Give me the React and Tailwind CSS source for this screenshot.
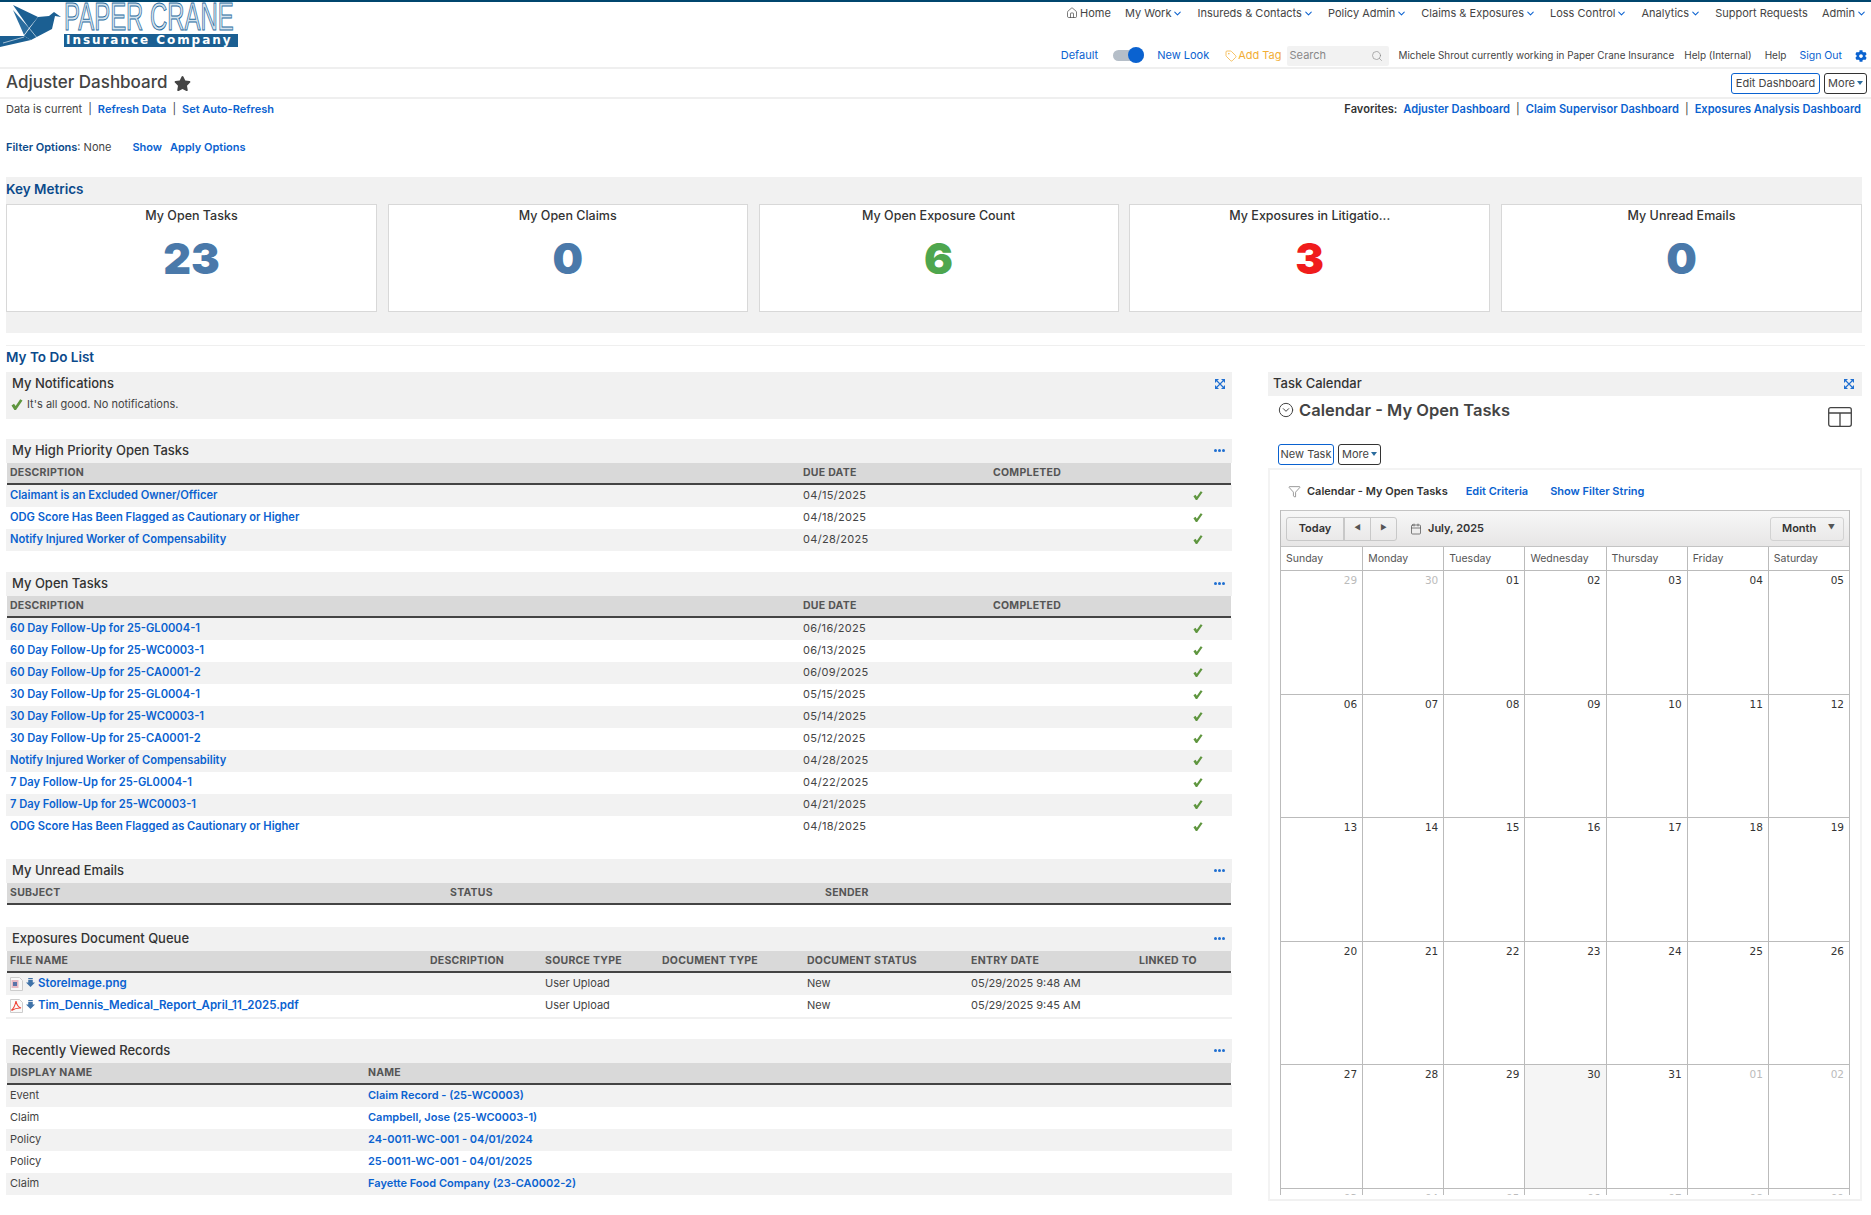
import { Calendar, ChevronDown, CircleChevronDown, Funnel, House, Search, Tag } from "lucide-react";
import { FaCog, FaStar } from "react-icons/fa";

const NAV = [
  { label: "My Work", menu: true },
  { label: "Insureds & Contacts", menu: true },
  { label: "Policy Admin", menu: true },
  { label: "Claims & Exposures", menu: true },
  { label: "Loss Control", menu: true },
  { label: "Analytics", menu: true },
  { label: "Support Requests", menu: false },
  { label: "Admin", menu: true },
];

const METRICS = [
  { title: "My Open Tasks", value: "23", color: "text-[#4a79aa]", width: "w-[371px]" },
  { title: "My Open Claims", value: "0", color: "text-[#4a79aa]", width: "w-[360px]" },
  { title: "My Open Exposure Count", value: "6", color: "text-[#4ea64e]", width: "w-[360px]" },
  { title: "My Exposures in Litigatio...", value: "3", color: "text-[#f01c1c]", width: "w-[361px]" },
  { title: "My Unread Emails", value: "0", color: "text-[#4a79aa]", width: "w-[361px]" },
];

const HIGH_PRIORITY = [
  ["Claimant is an Excluded Owner/Officer", "04/15/2025"],
  ["ODG Score Has Been Flagged as Cautionary or Higher", "04/18/2025"],
  ["Notify Injured Worker of Compensability", "04/28/2025"],
];

const OPEN_TASKS = [
  ["60 Day Follow-Up for 25-GL0004-1", "06/16/2025"],
  ["60 Day Follow-Up for 25-WC0003-1", "06/13/2025"],
  ["60 Day Follow-Up for 25-CA0001-2", "06/09/2025"],
  ["30 Day Follow-Up for 25-GL0004-1", "05/15/2025"],
  ["30 Day Follow-Up for 25-WC0003-1", "05/14/2025"],
  ["30 Day Follow-Up for 25-CA0001-2", "05/12/2025"],
  ["Notify Injured Worker of Compensability", "04/28/2025"],
  ["7 Day Follow-Up for 25-GL0004-1", "04/22/2025"],
  ["7 Day Follow-Up for 25-WC0003-1", "04/21/2025"],
  ["ODG Score Has Been Flagged as Cautionary or Higher", "04/18/2025"],
];

const RECENT = [
  ["Event", "Claim Record - (25-WC0003)"],
  ["Claim", "Campbell, Jose (25-WC0003-1)"],
  ["Policy", "24-0011-WC-001 - 04/01/2024"],
  ["Policy", "25-0011-WC-001 - 04/01/2025"],
  ["Claim", "Fayette Food Company (23-CA0002-2)"],
];

const WEEKDAYS = ["Sunday", "Monday", "Tuesday", "Wednesday", "Thursday", "Friday", "Saturday"];

const WEEKS = [
  ["29", "30", "01", "02", "03", "04", "05"],
  ["06", "07", "08", "09", "10", "11", "12"],
  ["13", "14", "15", "16", "17", "18", "19"],
  ["20", "21", "22", "23", "24", "25", "26"],
  ["27", "28", "29", "30", "31", "01", "02"],
  ["03", "04", "05", "06", "07", "08", "09"],
];

function isMuted(weekIndex, dayIndex) {
  if (weekIndex === 0) return dayIndex < 2;
  if (weekIndex === 4) return dayIndex > 4;
  return weekIndex === 5;
}

function Crane() {
  return (
    <svg viewBox="0 0 62 46" className="h-[46px] w-[62px] shrink-0">
      <polygon points="13,3 38,15 29,26" fill="#1b5f92" />
      <polygon points="13,8 29,26 24,33" fill="#2a6d9f" />
      <polygon points="38,15 49,14 54,10 61,15 55,14 52,27 31,38 24,34" fill="#1b5f92" />
      <polygon points="0,34 24,34 31,38 0,45" fill="#1b5f92" />
      <path d="M3 41 24 35M29 26 38 37" stroke="#fff" strokeWidth="0.6" />
    </svg>
  );
}

function Logo() {
  return (
    <div className="flex h-[46px] items-start">
      <Crane />
      <div className="ml-[2px] w-[174px]">
        <div className="h-[31px] origin-top-left scale-x-[0.63] whitespace-nowrap font-['Liberation_Sans',sans-serif] text-[38px] leading-[31px] text-[#d5e4ef] [-webkit-text-stroke:1px_#2b6c9e]">PAPER CRANE</div>
        <div className="mt-[1px] h-[13px] whitespace-nowrap bg-[#1b5f92] pl-[2px] font-['DejaVu_Sans',sans-serif] text-[12px] leading-[13px] font-bold tracking-[1.95px] text-white">Insurance Company</div>
      </div>
    </div>
  );
}

function MoreButton() {
  return (
    <button type="button" className="flex h-[21px] items-center rounded-[3px] border border-[#333] px-[3px] text-[11px] text-[#444]">
      More
      <span className="ml-[2px] h-0 w-0 border-x-[3.5px] border-t-[4px] border-x-transparent border-t-[#2b6c9e]" />
    </button>
  );
}

function ExpandIcon() {
  return (
    <svg viewBox="0 0 10 10" className="h-[10px] w-[10px] text-[#1f6fd1]" fill="currentColor">
      <path d="M0 0h4L0 4zM10 0v4L6 0zM0 10V6l4 4zM10 10H6l4-4z" />
      <path d="M2 2l6 6M8 2 2 8" stroke="currentColor" strokeWidth="1.1" />
    </svg>
  );
}

function Dots() {
  return (
    <span className="mb-[2px] flex gap-px">
      <span className="h-[3px] w-[3px] rounded-full bg-[#1f6fd1]" />
      <span className="h-[3px] w-[3px] rounded-full bg-[#1f6fd1]" />
      <span className="h-[3px] w-[3px] rounded-full bg-[#1f6fd1]" />
    </span>
  );
}

function Check({ className = "mb-[1px] h-[11px] w-[10px]" }) {
  return (
    <svg viewBox="0 0 12 12" className={`text-[#5f963f] ${className}`} fill="currentColor">
      <path d="M0.5 7 3 5.2 4.6 7.4 9.2 0.8 11.5 2 5 11.5H3.4z" />
    </svg>
  );
}

function PanelHeader({ title, action = <Dots /> }) {
  return (
    <div className="flex h-[24px] items-center justify-between bg-[#f1f1f1] pr-[7px] pl-[6px] text-[13px] font-medium text-[#333]">
      <span>{title}</span>
      {action}
    </div>
  );
}

function HeadRow({ columns, children }) {
  return (
    <div className={`mx-px grid h-[22px] items-center border-b-2 border-[#444] bg-[#d9d9d9] pl-[3px] text-[10.5px] font-bold tracking-[0.25px] text-[#555] ${columns}`}>
      {children}
    </div>
  );
}

function StripeRow({ index, columns, children }) {
  return (
    <div className={`grid h-[22px] items-center pb-[1px] pl-[4px] text-[11px] text-[#444] ${columns} ${index % 2 === 0 ? "bg-[#f2f2f2]" : "bg-white"}`}>
      {children}
    </div>
  );
}

function TaskTable({ title, rows }) {
  const columns = "grid-cols-[793px_190px_200px_1fr]";
  return (
    <section>
      <PanelHeader title={title} />
      <HeadRow columns={columns}>
        <span>DESCRIPTION</span>
        <span>DUE DATE</span>
        <span>COMPLETED</span>
      </HeadRow>
      {rows.map(([name, due], index) => (
        <StripeRow key={name + due} index={index} columns={columns}>
          <a className="text-[11.15px] font-semibold text-[#0a62d0]">{name}</a>
          <span className="tracking-[0.3px]">{due}</span>
          <span />
          <Check />
        </StripeRow>
      ))}
    </section>
  );
}

function DownArrow() {
  return (
    <svg viewBox="0 0 10 10" className="mb-[3px] h-[9px] w-[9px] text-[#3f72a8]" fill="currentColor">
      <path d="M2.5 0h5v1.2h-5zM2.5 2h5v3H10L5 10 0 5h2.5z" />
    </svg>
  );
}

function ImageFile() {
  return (
    <svg viewBox="0 0 13 14" className="h-[14px] w-[13px]">
      <path d="M.5.5h9l3 3v10H.5z" fill="#f7f7f7" stroke="#ccc" />
      <rect x="1.5" y="3" width="7" height="8" fill="#e7b9c4" />
      <rect x="3" y="5" width="4" height="4" fill="#5a73a8" />
    </svg>
  );
}

function PdfFile() {
  return (
    <svg viewBox="0 0 13 14" className="h-[14px] w-[13px]">
      <path d="M.5.5h9l3 3v10H.5z" fill="#fafafa" stroke="#ccc" />
      <path d="M6 2c-.6 3-2 7-4.500 9.500C4 10 8 8.700 11 9c-3-1-4.500-4-5-7z" fill="none" stroke="#ee4438" strokeWidth="1.100" />
    </svg>
  );
}

function DocumentQueue() {
  const columns = "grid-cols-[420px_115px_117px_145px_164px_168px_1fr]";
  const docs = [
    { icon: <ImageFile />, name: "StoreImage.png", date: "05/29/2025 9:48 AM" },
    { icon: <PdfFile />, name: "Tim_Dennis_Medical_Report_April_11_2025.pdf", date: "05/29/2025 9:45 AM" },
  ];
  return (
    <section className="mt-[1px] mb-[-1px] border-b-2 border-[#f1f1f1]">
      <PanelHeader title="Exposures Document Queue" />
      <HeadRow columns={columns}>
        <span>FILE NAME</span>
        <span>DESCRIPTION</span>
        <span>SOURCE TYPE</span>
        <span>DOCUMENT TYPE</span>
        <span>DOCUMENT STATUS</span>
        <span>ENTRY DATE</span>
        <span>LINKED TO</span>
      </HeadRow>
      {docs.map((doc, index) => (
        <StripeRow key={doc.name} index={index} columns={columns}>
          <span className="flex items-center gap-[3px] whitespace-nowrap">
            {doc.icon}
            <DownArrow />
            <a className="text-[11.5px] font-semibold text-[#0a62d0]">{doc.name}</a>
          </span>
          <span />
          <span>User Upload</span>
          <span />
          <span>New</span>
          <span>{doc.date}</span>
          <span />
        </StripeRow>
      ))}
    </section>
  );
}

function RecentRecords() {
  const columns = "grid-cols-[358px_1fr]";
  return (
    <section>
      <PanelHeader title="Recently Viewed Records" />
      <HeadRow columns={columns}>
        <span>DISPLAY NAME</span>
        <span>NAME</span>
      </HeadRow>
      {RECENT.map(([kind, name], index) => (
        <StripeRow key={name} index={index} columns={columns}>
          <span>{kind}</span>
          <a className="font-semibold text-[#0a62d0]">{name}</a>
        </StripeRow>
      ))}
    </section>
  );
}

function TaskCalendar() {
  return (
    <aside className="ml-[36px] h-[829px] w-[594px] border-b-2 border-[#f1f1f1]">
      <div className="flex h-[24px] items-center justify-between bg-[#f1f1f1] pr-[8px] pl-[5px] text-[13px] font-medium text-[#333]">
        <span>Task Calendar</span>
        <ExpandIcon />
      </div>
      <div className="flex h-[74px] items-start justify-between border-b-2 border-[#f3f3f3] pr-[10px] pl-[10px]">
        <div>
          <div className="mt-[2px] flex items-center gap-[5px] text-[16.5px] font-semibold text-[#444]">
            <CircleChevronDown size={16} strokeWidth={1.5} />
            <span>Calendar - My Open Tasks</span>
          </div>
          <div className="mt-[21px] flex gap-[4px]">
            <button type="button" className="h-[21px] w-[56px] rounded-[3px] border border-[#0a62d0] text-[11px] text-[#444]">New Task</button>
            <MoreButton />
          </div>
        </div>
        <svg viewBox="0 0 24 20" className="mt-[11px] h-[20px] w-[24px]" fill="none" stroke="#444" strokeWidth="1.3">
          <rect x="0.7" y="0.7" width="22.600" height="18.600" rx="2" />
          <path d="M1 6h22M12 6v13" />
        </svg>
      </div>
      <div className="h-[731px] border-x-2 border-[#f3f3f3] px-[10px]">
        <div className="flex h-[40px] items-center pt-[3px] pl-[8px] text-[11px] font-semibold">
          <Funnel size={13} strokeWidth={1} className="text-[#444]" />
          <span className="ml-[6px] text-[#333]">Calendar - My Open Tasks</span>
          <a className="ml-[18px] text-[#0a62d0]">Edit Criteria</a>
          <a className="ml-[22px] text-[#0a62d0]">Show Filter String</a>
        </div>
        <div className="h-[685px] w-[570px] overflow-hidden border-x border-[#bbb]">
          <div className="flex h-[37px] items-center border-y border-[#c4c4c4] bg-linear-to-b from-[#f7f7f7] to-[#e7e6e6] px-[5px] text-[11px] font-semibold text-[#333]">
            <div className="flex h-[24px] rounded-[3px] border border-[#c8c8c8] text-[11px]">
              <span className="flex w-[56px] items-center justify-center">Today</span>
              <span className="flex w-[27px] items-center justify-center border-l-2 border-[#c8c8c8] text-[7px] text-[#555]">◀</span>
              <span className="flex w-[26px] items-center justify-center border-l border-[#c8c8c8] text-[7px] text-[#555]">▶</span>
            </div>
            <Calendar size={12} strokeWidth={1.5} className="ml-[13px] text-[#555]" />
            <span className="ml-[6px]">July, 2025</span>
            <span className="ml-auto flex h-[24px] w-[74px] items-center justify-between rounded-[3px] border border-[#d2d2d2] pr-[8px] pl-[11px]">
              Month
              <span className="text-[7px] text-[#555]">▼</span>
            </span>
          </div>
          <div className="grid h-[24px] grid-cols-7 border-b border-[#bbb] text-[10.5px] text-[#555]">
            {WEEKDAYS.map((day, index) => (
              <div key={day} className={`flex items-center pl-[5px] ${index > 0 ? "border-l border-[#bbb]" : ""}`}>{day}</div>
            ))}
          </div>
          {WEEKS.map((week, weekIndex) => (
            <div key={week[0] + week[1]} className="grid h-[123.600px] grid-cols-7 border-b border-[#bbb] font-['DejaVu_Sans',sans-serif] text-[10.5px]">
              {week.map((day, dayIndex) => (
                <div
                  key={day}
                  className={`pt-[2px] pr-[5px] text-right ${dayIndex > 0 ? "border-l border-[#bbb]" : ""} ${isMuted(weekIndex, dayIndex) ? "text-[#bbb]" : "text-[#333]"} ${weekIndex === 4 && dayIndex === 3 ? "bg-[#f5f5f5]" : ""}`}
                >
                  {day}
                </div>
              ))}
            </div>
          ))}
        </div>
      </div>
    </aside>
  );
}

export default function App() {
  return (
    <div className="h-[1215px] w-[1871px] overflow-hidden bg-white font-['Inter','Liberation_Sans',sans-serif] text-[11px] text-[#444]">
      <header className="flex h-[69px] items-start justify-between border-t-2 border-b-2 border-t-[#00466e] border-b-[#efefef]">
        <Logo />
        <div className="flex flex-col items-end pr-[4px]">
          <nav className="mt-[3px] flex items-center gap-[14px] text-[11px] text-[#444]">
            <span className="flex items-center gap-[2px]"><House size={12} strokeWidth={1.4} />Home</span>
            {NAV.map((item) => (
              <span key={item.label} className="flex items-center gap-px">
                {item.label}
                {item.menu ? <ChevronDown size={11} strokeWidth={2.2} className="text-[#0a62d0]" /> : null}
              </span>
            ))}
          </nav>
          <div className="mt-[24px] flex h-[20px] items-center">
            <a className="text-[#0a62d0]">Default</a>
            <span className="relative ml-[15px] h-[11px] w-[31px] rounded-full bg-[#b5bec8]">
              <span className="absolute top-[-3px] right-0 h-[16px] w-[16px] rounded-full bg-[#0a62d0]" />
            </span>
            <a className="ml-[13px] text-[#0a62d0]">New Look</a>
            <span className="ml-[16px] flex items-center gap-px text-[#f2ae35]"><Tag size={12} strokeWidth={1.5} />Add Tag</span>
            <span className="ml-[5px] flex h-[20px] w-[102px] items-center justify-between rounded-[2px] bg-[#f2f2f2] pr-[6px] pl-[3px] text-[#888]">
              Search
              <Search size={12} strokeWidth={1.3} />
            </span>
            <span className="ml-[10px] text-[9.9px]">Michele Shrout currently working in Paper Crane Insurance</span>
            <span className="ml-[10px] text-[10px]">Help (Internal)</span>
            <span className="ml-[13px] text-[10px]">Help</span>
            <a className="ml-[13px] text-[10.5px] text-[#0a62d0]">Sign Out</a>
            <FaCog size={12} className="ml-[13px] text-[#0a62d0]" />
          </div>
        </div>
      </header>

      <div className="flex h-[30px] items-center justify-between border-b-2 border-[#efefef] pr-[4px] pl-[6px]">
        <h1 className="flex items-center gap-[7px] text-[17px] font-medium text-[#444]">
          Adjuster Dashboard
          <FaStar size={17} />
        </h1>
        <div className="flex gap-[4px]">
          <button type="button" className="h-[21px] w-[89px] rounded-[3px] border border-[#0a62d0] text-[11px] text-[#444]">Edit Dashboard</button>
          <MoreButton />
        </div>
      </div>

      <div className="flex h-[20px] items-center justify-between pr-[10px] pl-[6px]">
        <div className="flex gap-[6px]">
          <span>Data is current</span>
          <span>|</span>
          <a className="font-semibold text-[#0a62d0]">Refresh Data</a>
          <span>|</span>
          <a className="font-semibold text-[#0a62d0]">Set Auto-Refresh</a>
        </div>
        <div className="flex gap-[6px] text-[11.1px] font-semibold">
          <span className="text-[#333]">Favorites:</span>
          <a className="text-[#0a62d0]">Adjuster Dashboard</a>
          <span className="font-normal">|</span>
          <a className="text-[#0a62d0]">Claim Supervisor Dashboard</a>
          <span className="font-normal">|</span>
          <a className="text-[#0a62d0]">Exposures Analysis Dashboard</a>
        </div>
      </div>

      <div className="mt-[18px] flex h-[20px] items-center pl-[6px]">
        <span className="font-semibold text-[#0b4a8b]">Filter Options</span>
        <span>: None</span>
        <a className="ml-[21px] font-semibold text-[#0a62d0]">Show</a>
        <a className="ml-[8px] font-semibold text-[#0a62d0]">Apply Options</a>
      </div>

      <section className="mx-[6px] mt-[20px] h-[156px] w-[1856px] border-b border-[#f1f1f1] bg-[#f1f1f1]">
        <div className="flex h-[27px] items-center pb-[3px] text-[13.5px] font-semibold text-[#0b4a8b]">Key Metrics</div>
        <div className="flex justify-between">
          {METRICS.map((metric) => (
            <div key={metric.title} className={`h-[108px] border border-[#d8d8d8] bg-white pt-[3px] text-center ${metric.width}`}>
              <div className="text-[12.5px] leading-[16px] font-medium text-[#333]">{metric.title}</div>
              <div className={`mt-[9px] text-[43px] leading-[50px] font-black ${metric.color}`}>{metric.value}</div>
            </div>
          ))}
        </div>
      </section>

      <h2 className="mx-[6px] mt-[12px] flex h-[26px] items-center border-t border-[#efefef] pb-[3px] text-[13.5px] font-semibold text-[#0b4a8b]">My To Do List</h2>

      <div className="mt-[1px] flex pl-[6px]">
        <div className="flex w-[1226px] flex-col gap-[21px]">
          <section className="mb-[-1px] h-[47px] bg-[#f1f1f1]">
            <PanelHeader title="My Notifications" action={<ExpandIcon />} />
            <div className="flex items-center gap-[4px] pl-[5px] text-[11px]">
              <Check className="h-[13px] w-[12px]" />
              <span>It's all good. No notifications.</span>
            </div>
          </section>
          <TaskTable title="My High Priority Open Tasks" rows={HIGH_PRIORITY} />
          <TaskTable title="My Open Tasks" rows={OPEN_TASKS} />
          <section>
            <PanelHeader title="My Unread Emails" />
            <HeadRow columns="grid-cols-[440px_375px_1fr]">
              <span>SUBJECT</span>
              <span>STATUS</span>
              <span>SENDER</span>
            </HeadRow>
          </section>
          <DocumentQueue />
          <RecentRecords />
        </div>
        <TaskCalendar />
      </div>
    </div>
  );
}
